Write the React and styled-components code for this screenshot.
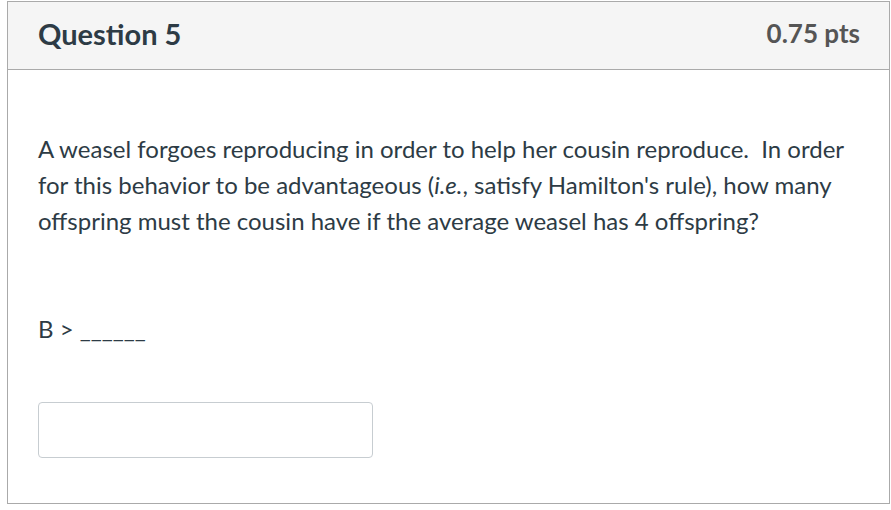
import React from "react";
import styled, { createGlobalStyle } from "styled-components";

const Global = createGlobalStyle`
  body {
    margin: 0;
    background: #fff;
    font-family: Lato, "Liberation Sans", sans-serif;
    color: #2d3b45;
  }
`;

export default function App() {
  return (
    <>
      <Global />
      <Page>
        <QuestionBox>
          <Header>
            <Title>Question 5</Title>
            <Points>0.75 pts</Points>
          </Header>
          <Body>
            <Text>
              A weasel forgoes reproducing in order to help her cousin reproduce.{"\u00a0 "}In order
              for this behavior to be advantageous (<em>i.e.</em>, satisfy Hamilton's rule), how many
              offspring must the cousin have if the average weasel has 4 offspring?
            </Text>
            <Blank>B &gt; ______</Blank>
            <AnswerInput type="text" />
          </Body>
        </QuestionBox>
      </Page>
    </>
  );
}

const Page = styled.div`
  padding: 1px 0 0 7px;
`;

const QuestionBox = styled.div`
  width: 881px;
  border: 1px solid #aaaaaa;
  background: #fff;
`;

const Header = styled.div`
  height: 68px;
  background: #f5f5f5;
  border-bottom: 1px solid #aaaaaa;
  display: flex;
  align-items: center;
  justify-content: space-between;
  padding: 0 29px 5px 30px;
  box-sizing: border-box;
`;

const Title = styled.h2`
  margin: 0;
  font-size: 29px;
  font-weight: 700;
  color: #2d3b45;
`;

const Points = styled.div`
  font-size: 26px;
  font-weight: 700;
  color: #555;
`;

const Body = styled.div`
  padding: 61px 30px 45px;
`;

const Text = styled.p`
  margin: 0;
  font-size: 24px;
  line-height: 36px;
`;

const Blank = styled.p`
  margin: 72px 0 0;
  font-size: 24px;
  line-height: 36px;
`;

const AnswerInput = styled.input`
  display: block;
  margin-top: 55px;
  width: 335px;
  height: 56px;
  box-sizing: border-box;
  border: 1px solid #c7cdd1;
  border-radius: 4px;
  background: #fff;
`;
